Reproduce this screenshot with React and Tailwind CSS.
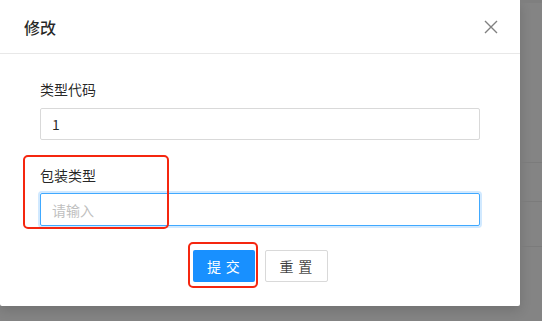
import React, { useState } from 'react';

const App = () => {
  const [code, setCode] = useState("1");
  const [packType, setPackType] = useState("");

  return (
    <div className="w-[542px] h-[321px] flex items-start overflow-hidden bg-[#848484] font-['Noto_Sans_CJK_SC','Noto_Sans',sans-serif]">
      {/* Modal */}
      <div className="w-[520px] shrink-0 bg-white rounded-b-[2px] shadow-[0_4px_12px_rgba(0,0,0,0.15)]">
        <div className="h-[54px] flex items-center justify-between pl-6 pr-[21px] border-b border-[#e8e8e8]">
          <span className="text-[16px] font-medium text-[rgba(0,0,0,0.85)]">修改</span>
          <button className="w-4 h-4 flex items-center justify-center">
            <svg width="14" height="14" viewBox="0 0 14 14" fill="none" stroke="#808080" strokeWidth="1.4">
              <path d="M1 1L13 13M13 1L1 13" />
            </svg>
          </button>
        </div>

        <div className="px-10 pt-6 pb-6">
          <div>
            <label className="block text-sm leading-[22px] mb-2 text-[rgba(0,0,0,0.85)]">类型代码</label>
            <input
              type="text"
              className="block w-full h-8 px-[11px] text-sm text-[rgba(0,0,0,0.85)] border border-[#d9d9d9] rounded-[2px] outline-none"
              value={code}
              onChange={(e) => setCode(e.target.value)}
            />
          </div>

          <div className="relative mt-6">
            <label className="block text-sm leading-[22px] mb-[7px] text-[rgba(0,0,0,0.85)]">包装类型</label>
            <input
              type="text"
              placeholder="请输入"
              className="block w-full h-[33px] px-[11px] text-sm text-[rgba(0,0,0,0.85)] placeholder:text-[#bfbfbf] border border-[#40a9ff] rounded-[2px] outline-none shadow-[0_0_0_2px_rgba(24,144,255,0.2)]"
              value={packType}
              onChange={(e) => setPackType(e.target.value)}
            />
            {/* annotation box */}
            <div className="absolute left-[-17px] top-[-9px] w-[146px] h-[74px] border-2 border-[#f5260f] rounded-[5px] pointer-events-none" />
          </div>

          <div className="flex justify-center gap-[10px] mt-6">
            <div className="relative">
              <button className="w-[62px] h-8 bg-[#1890ff] text-white text-sm rounded-[2px]">
                <span className="tracking-[0.34em] mr-[-0.34em]">提交</span>
              </button>
              <div className="absolute left-[-5px] top-[-8px] right-[-3px] bottom-[-6px] border-2 border-[#f5260f] rounded-[5px] pointer-events-none" />
            </div>
            <button className="w-[63px] h-8 bg-white border border-[#d9d9d9] text-sm text-[rgba(0,0,0,0.75)] rounded-[2px]">
              <span className="tracking-[0.34em] mr-[-0.34em]">重置</span>
            </button>
          </div>
        </div>
      </div>

      {/* page behind overlay */}
      <div className="flex-1 flex flex-col">
        <div className="h-[3px] bg-[#7f7f7f]" />
        <div className="h-[160px] border-b border-[#7b7b7b]" />
        <div className="h-[39px] border-b border-[#7b7b7b]" />
        <div className="h-[45px] border-b border-[#7b7b7b]" />
      </div>
    </div>
  );
};

export default App;
